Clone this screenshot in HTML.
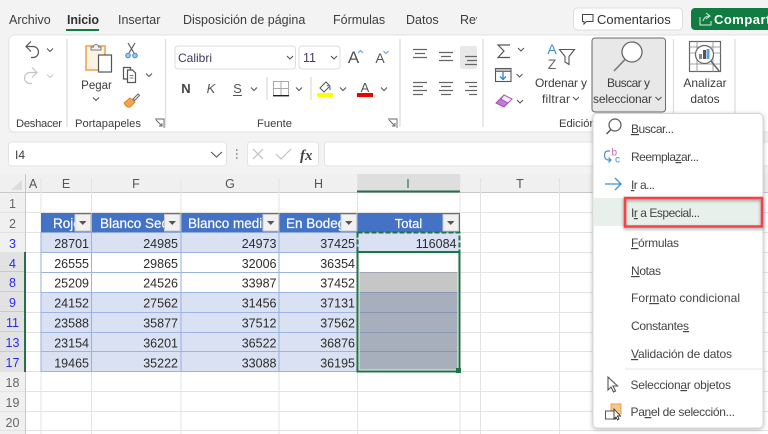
<!DOCTYPE html>
<html><head><meta charset="utf-8"><title>Excel</title>
<style>
html,body{margin:0;padding:0;background:#f3f3f3;width:768px;height:434px;overflow:hidden}
svg{display:block}
text{font-family:"Liberation Sans",sans-serif;font-size:12px;fill:#3c3c3c}
.t{font-size:12.5px}
.n{font-size:12.5px;fill:#2b2b2b}
.r{text-anchor:end}
.c{text-anchor:middle}
.h{font-size:13.5px;fill:#fff;stroke:#fff;stroke-width:.2}
.hd{font-size:12.5px;fill:#555;text-anchor:middle}
.rh{font-size:12.5px;fill:#666;text-anchor:middle}
.b{fill:#2a2af0}
.m{font-size:12px;fill:#444}
.l{font-size:11.2px}
.u{text-decoration:underline}
.ic{fill:none;stroke:#555;stroke-width:1.2}
.ch{fill:none;stroke:#555;stroke-width:1.1}
.grid line{stroke:#e3e3e3;stroke-width:1}
</style></head><body>
<svg width="768" height="434" viewBox="0 0 768 434" xmlns="http://www.w3.org/2000/svg">
<defs>
<filter id="sh" x="-10%" y="-10%" width="120%" height="120%"><feDropShadow dx="0" dy="1" stdDeviation="2" flood-color="#000" flood-opacity=".28"/></filter>
<filter id="sh2" x="-10%" y="-30%" width="120%" height="170%"><feDropShadow dx="0" dy="1.5" stdDeviation="1.5" flood-color="#000" flood-opacity=".4"/></filter>
<path id="chev" d="M-3 -1.5 L0 1.5 L3 -1.5"/>
</defs>
<rect width="768" height="434" fill="#f3f3f3"/>

<!-- tabs -->
<text x="9" y="24" class="t">Archivo</text>
<text x="67" y="24" class="t" style="font-weight:700;fill:#333" textLength="32">Inicio</text>
<text x="118" y="24" class="t">Insertar</text>
<text x="183" y="24" class="t">Disposición de página</text>
<text x="333" y="24" class="t">Fórmulas</text>
<text x="406" y="24" class="t">Datos</text>
<svg x="460" y="8" width="17" height="22"><text x="0" y="16" class="t">Revisar</text></svg>
<rect x="66" y="29" width="33" height="2" fill="#107c41"/>

<rect x="573.5" y="8" width="109" height="22" rx="4" fill="#fff" stroke="#dcdcdc"/>
<path d="M582.500 14.500h10.500v7h-6.500l-2.500 2.500v-2.500h-1.500z" class="ic" style="stroke:#444;stroke-width:1"/>
<text x="597" y="24" style="font-size:13px;fill:#333">Comentarios</text>
<rect x="691" y="8" width="80" height="22" rx="4" fill="#107c41"/>
<path d="M700 17v8h11v-4M703 21c1-3 3-5 6-5M706 13l4 3-4 3" fill="none" stroke="#dcebe2" stroke-width="1"/>
<text x="714" y="24" style="font-size:13px;fill:#fff;font-weight:700" textLength="66">Compartir</text>

<!-- ribbon -->
<rect x="9" y="35" width="770" height="97" rx="5" fill="#fff" stroke="#e2e2e2"/>
<g stroke="#e1e1e1" stroke-width="1.4">
<line x1="67" y1="39" x2="67" y2="127"/><line x1="165.500" y1="39" x2="165.500" y2="127"/><line x1="400" y1="39" x2="400" y2="127"/><line x1="483" y1="39" x2="483" y2="127"/><line x1="673.500" y1="39" x2="673.500" y2="127"/><line x1="735" y1="39" x2="735" y2="127"/>
</g>

<!-- undo/redo -->
<path d="M31 41.500 L26 46.500 L31 51.500 M26 46.500 H33 a5.500 5.500 0 0 1 0 11 l-2 0" fill="none" stroke="#555" stroke-width="1.2"/>
<use href="#chev" x="50" y="50" class="ch"/>
<path d="M32 67.500 L37 72.500 L32 77.500 M37 72.500 H30 a5.500 5.500 0 0 0 0 11 l2 0" fill="none" stroke="#c4c4c4" stroke-width="1.2"/>
<use href="#chev" x="50" y="76" class="ch" style="stroke:#c8c8c8"/>
<text x="16" y="127" class="l" textLength="46">Deshacer</text>
<!-- clipboard -->
<rect x="86" y="46" width="19" height="24" fill="#fdf3e3" stroke="#eba14a" stroke-width="1.5"/>
<path d="M91 50v-3h2.500a2.500 2.500 0 0 1 5 0H101v3z" fill="#f4f4f4" stroke="#777"/>
<rect x="98.500" y="55" width="13" height="17" fill="#fff" stroke="#555" stroke-width="1.200"/>
<text x="96.500" y="89" class="c" style="font-size:11.500px">Pegar</text>
<use href="#chev" x="96" y="99" class="ch"/>
<!-- scissors -->
<path d="M128 43l6 10M135 43l-6 10" stroke="#555" fill="none" stroke-width="1.100"/>
<circle cx="128" cy="55.500" r="2.300" fill="#9cc8ec" stroke="#3d8fd6"/><circle cx="135" cy="55.500" r="2.300" fill="#9cc8ec" stroke="#3d8fd6"/>
<!-- copy -->
<path d="M127 79h-3.500V67.500h7v2" class="ic"/><path d="M127.500 70h5l3 3v9.500h-8z" class="ic"/><path d="M129.500 75.500h4M129.500 78h4" class="ic" style="stroke-width:.8"/>
<use href="#chev" x="149" y="75" class="ch"/>
<!-- brush -->
<path d="M133 99l5-5 1.500 1.500-5 5z" fill="#fff" stroke="#666"/>
<path d="M124 103l6-5 5 4-5 5c-2 .5-4-.5-6-4z" fill="#f5a55a" stroke="#e07f20"/>
<text x="75" y="127" class="l" textLength="66">Portapapeles</text>
<path d="M155 119h9v9M156 120l6 6M159 126h3v-3" fill="none" stroke="#666" stroke-width=".9"/>

<!-- font -->
<rect x="175" y="46" width="120.500" height="23" rx="3" fill="#fff" stroke="#dcdcdc"/>
<text x="178" y="62" style="font-size:12px;fill:#3a3a5a">Calibri</text>
<use href="#chev" x="290" y="57.500" class="ch"/>
<rect x="299" y="46" width="41" height="23" rx="3" fill="#fff" stroke="#dcdcdc"/>
<text x="303" y="62" style="font-size:12.500px;fill:#4a3a6a">11</text>
<use href="#chev" x="334" y="57.500" class="ch"/>
<text x="353.500" y="63" class="c" style="font-size:17px;fill:#555">A</text>
<path d="M358 53l2.500-2.500 2.500 2.500" fill="none" stroke="#6aa8dc" stroke-width="1.200"/>
<text x="380" y="63" class="c" style="font-size:14px;fill:#555">A</text>
<path d="M383.500 51l2.500 2.500 2.500-2.500" fill="none" stroke="#6aa8dc" stroke-width="1.200"/>
<text x="186" y="93" class="c" style="font-size:13px;font-weight:700;fill:#444">N</text>
<text x="211" y="93" class="c" style="font-size:13px;font-style:italic;fill:#555">K</text>
<text x="237.500" y="93" class="c" style="font-size:13px;fill:#555">S</text>
<rect x="233" y="95" width="9" height="1" fill="#555"/>
<use href="#chev" x="254" y="89" class="ch"/>
<line x1="267" y1="77" x2="267" y2="100" stroke="#ddd" stroke-width="1.300"/>
<rect x="273.500" y="81.500" width="15" height="14" fill="none" stroke="#aaa"/>
<path d="M281 81v14M273 88.500h16" stroke="#aaa" fill="none"/>
<rect x="273" y="95" width="16" height="1.400" fill="#222"/>
<use href="#chev" x="299" y="89" class="ch"/>
<line x1="311" y1="77" x2="311" y2="100" stroke="#ddd" stroke-width="1.300"/>
<path d="M326 82l-6 6 4 4 6-6z" class="ic" style="stroke-width:1"/><path d="M330 90c0-2 0-4-1-5l-2 1" fill="none" stroke="#2d7fc4" stroke-width="1.200"/>
<rect x="317" y="93" width="16" height="4" fill="#ffff00"/>
<use href="#chev" x="343" y="89" class="ch"/>
<text x="365" y="92" class="c" style="font-size:13px;fill:#555">A</text>
<rect x="357" y="93" width="16" height="4" fill="#ee0000"/>
<use href="#chev" x="384" y="89" class="ch"/>
<text x="257" y="127" class="l" textLength="35">Fuente</text>
<path d="M388 119h9v9M389 120l6 6M392 126h3v-3" fill="none" stroke="#666" stroke-width=".9"/>

<!-- align -->
<rect x="460" y="46" width="17" height="23" rx="2" fill="#e8e8e8"/>
<g stroke="#666" stroke-width="1.200">
<path d="M413 49.500h14M415 53.500h10M413 57.500h14"/>
<path d="M439 52.500h14M441 56.500h10M439 60.500h14"/>
<path d="M465 56.500h12M467 60.500h10M465 64.500h12"/>
<path d="M413 82.500h14M413 86.500h10M413 90.500h14M413 94.500h10"/>
<path d="M439 82.500h14M441 86.500h10M439 90.500h14M441 94.500h10"/>
<path d="M465 82.500h12M469 86.500h8M465 90.500h12M469 94.500h8"/>
</g>

<!-- edit -->
<path d="M510 45h-12l6 6-6 6.500h12" fill="none" stroke="#555" stroke-width="1.200"/>
<use href="#chev" x="521" y="49.500" class="ch"/>
<rect x="495.500" y="68.500" width="15.500" height="13" fill="#fff" stroke="#555" stroke-width="1.100"/>
<rect x="495.500" y="68.500" width="15.500" height="3" fill="#bbb" stroke="#555" stroke-width=".8"/>
<path d="M503 72v7M500 76.500l3 3 3-3" fill="none" stroke="#2d86d0" stroke-width="1.300"/>
<use href="#chev" x="519.500" y="75.500" class="ch"/>
<path d="M496 103l8-8 8 4-8 8z" fill="#c27bd2" stroke="#a050b5"/><path d="M504 95l8 4-4 4-7-4z" fill="#f4e8f6" stroke="#a050b5" stroke-width=".8"/>
<use href="#chev" x="520" y="101.500" class="ch"/>
<text x="552" y="54" class="c" style="font-size:14px;fill:#3c8fd4">A</text>
<text x="552" y="69" class="c" style="font-size:14px;fill:#666">Z</text>
<path d="M559.500 49.500h15l-5.500 7v8l-4-2.500v-5.500z" fill="none" stroke="#555" stroke-width="1.100"/>
<text x="535" y="87" textLength="52">Ordenar y</text>
<text x="542" y="103" textLength="28">filtrar</text>
<use href="#chev" x="576" y="98.500" class="ch" style="stroke-width:1"/>
<text x="559" y="127" class="l">Edición</text>

<rect x="592" y="38" width="73.500" height="74" rx="3" fill="#e8e8e8" stroke="#6a6a6a"/>
<circle cx="632" cy="52" r="10" fill="#fff" stroke="#666" stroke-width="1.300"/>
<line x1="625" y1="59.500" x2="614" y2="71" stroke="#777" stroke-width="1.600"/>
<text x="607" y="87" textLength="43">Buscar y</text>
<text x="593" y="103" textLength="59">seleccionar</text>
<use href="#chev" x="658.500" y="98.500" class="ch"/>

<!-- analyze -->
<rect x="689.500" y="41.500" width="31" height="30" fill="#fff" stroke="#666" stroke-width="1.200"/>
<path d="M689 47h32M689 64h32M697 41v31M713 41v31M689 53h32" stroke="#888" fill="none" stroke-width=".8"/>
<circle cx="704.500" cy="54.500" r="9" fill="#fff" stroke="#666" stroke-width="1.200"/>
<rect x="699" y="54" width="3" height="5" fill="#888"/><rect x="703" y="50" width="3" height="9" fill="#555"/><rect x="706.500" y="49" width="3" height="10" fill="#5ba3de"/>
<line x1="711" y1="61" x2="719" y2="71" stroke="#666" stroke-width="1.500"/>
<text x="705" y="87" class="c">Analizar</text>
<text x="705" y="103" class="c">datos</text>

<!-- formula bar -->
<rect x="8.500" y="142" width="218" height="24" rx="3" fill="#fff" stroke="#e3e3e3"/>
<text x="15" y="159" style="font-size:12px">I4</text>
<path d="M211 152l5.500 5 5.500-5" fill="none" stroke="#555" stroke-width="1.100"/>
<g fill="#999"><rect x="236" y="149" width="1.500" height="2"/><rect x="236" y="153" width="1.500" height="2"/><rect x="236" y="157" width="1.500" height="2"/></g>
<rect x="247.500" y="142" width="71" height="24" rx="3" fill="#fff" stroke="#e3e3e3"/>
<path d="M253 149l10 10M263 149l-10 10" stroke="#c0c0c0" stroke-width="1.200" fill="none"/>
<path d="M276 154l5 5 10-10" stroke="#c0c0c0" stroke-width="1.200" fill="none"/>
<text x="300" y="160" style="font-family:'Liberation Serif',serif;font-style:italic;font-weight:700;font-size:15px;fill:#444">fx</text>
<rect x="324.500" y="142" width="460" height="24" rx="3" fill="#fff" stroke="#e3e3e3"/>

<!-- sheet -->
<rect x="0" y="174" width="768" height="260" fill="#fff"/>
<rect x="0" y="174" width="768" height="18" fill="#f0f0f0"/>
<rect x="0" y="174" width="25" height="260" fill="#f0f0f0"/>
<path d="M22 180v10h-11z" fill="#dcdcdc"/>
<rect x="0" y="252" width="25" height="119.500" fill="#e2e2e2"/>
<rect x="357" y="174" width="103" height="18" fill="#dedede"/>
<g class="grid">
<line x1="0" y1="192.500" x2="768" y2="192.500" style="stroke:#c8c8c8"/>
<line x1="0" y1="212.500" x2="768" y2="212.500"/><line x1="0" y1="232.500" x2="768" y2="232.500"/><line x1="0" y1="252.500" x2="768" y2="252.500"/><line x1="0" y1="272.500" x2="768" y2="272.500"/><line x1="0" y1="292.500" x2="768" y2="292.500"/><line x1="0" y1="312.500" x2="768" y2="312.500"/><line x1="0" y1="332.500" x2="768" y2="332.500"/><line x1="0" y1="351.500" x2="768" y2="351.500"/><line x1="0" y1="371.500" x2="768" y2="371.500"/><line x1="0" y1="391.500" x2="768" y2="391.500"/><line x1="0" y1="411.500" x2="768" y2="411.500"/><line x1="0" y1="430.500" x2="768" y2="430.500"/>
<line x1="25.500" y1="174" x2="25.500" y2="434" style="stroke:#c8c8c8"/>
<line x1="41" y1="178" x2="41" y2="434"/><line x1="91.500" y1="178" x2="91.500" y2="434"/><line x1="181" y1="178" x2="181" y2="434"/><line x1="279" y1="178" x2="279" y2="434"/><line x1="357.500" y1="178" x2="357.500" y2="434"/><line x1="460" y1="178" x2="460" y2="434"/><line x1="480.500" y1="178" x2="480.500" y2="434"/><line x1="559.500" y1="178" x2="559.500" y2="434"/>
</g>
<rect x="357" y="190.500" width="103" height="2" fill="#217346"/>
<text x="33" y="188" class="hd">A</text><text x="66" y="188" class="hd">E</text><text x="136" y="188" class="hd">F</text><text x="230" y="188" class="hd">G</text><text x="318.500" y="188" class="hd">H</text><text x="408" y="188" class="hd" style="fill:#217346">I</text><text x="520" y="188" class="hd">T</text>

<!-- row headers -->
<text x="12.500" y="208" class="rh">1</text>
<text x="12.500" y="228" class="rh">2</text>
<text x="12.500" y="248" class="rh b">3</text>
<text x="12.500" y="268" class="rh b">4</text>
<text x="12.500" y="287" class="rh b">8</text>
<text x="12.500" y="307" class="rh b">9</text>
<text x="12.500" y="327" class="rh b">11</text>
<text x="12.500" y="347" class="rh b">13</text>
<text x="12.500" y="367" class="rh b">17</text>
<text x="12.500" y="387" class="rh">18</text>
<text x="12.500" y="407" class="rh">19</text>
<text x="12.500" y="427" class="rh">20</text>
<g stroke="#c9c9c9"><path d="M0 271.500h25M0 291.500h25M0 311.500h25M0 331.500h25M0 351.500h25"/></g>
<rect x="24" y="252" width="2" height="120" fill="#217346"/>

<!-- table -->
<rect x="41" y="213" width="316" height="19.500" fill="#4472c4"/>
<rect x="357" y="213" width="103" height="19.500" fill="#4472c4"/>
<rect x="41" y="232.500" width="316" height="20" fill="#d9e1f2"/>
<rect x="357" y="232.500" width="103" height="20" fill="#d9e1f2"/>
<rect x="41" y="292" width="316" height="79.500" fill="#d9e1f2"/>
<rect x="41" y="252.500" width="316" height="39.500" fill="#fff"/>
<g stroke="#9db4e0" stroke-width="1.100" fill="none">
<path d="M41 252.500h316M41 272.500h316M41 292.500h316M41 312.500h316M41 332.500h316M41 351.500h316M41 371.500h316"/>
<path d="M41 232v140M91.500 213v159M181 213v159M279 213v159M357 213v159"/>
</g>
<!-- header cells -->
<svg x="41" y="213" width="34" height="20"><text x="12" y="15" class="h">Rojo</text></svg>
<svg x="91" y="213" width="73" height="20"><text x="9" y="15" class="h">Blanco Seco</text></svg>
<svg x="181" y="213" width="82" height="20"><text x="7" y="15" class="h">Blanco medio</text></svg>
<svg x="279" y="213" width="62" height="20"><text x="7" y="15" class="h">En Bodega</text></svg>
<text x="408.500" y="228" class="h c" style="font-size:13px">Total</text>
<g>
<rect x="75" y="214.500" width="15.500" height="16.500" fill="#f1f1f1" stroke="#ccc"/><path d="M79 221h7.500l-3.750 4z" fill="#555"/>
<rect x="164.500" y="214.500" width="15.500" height="16.500" fill="#f1f1f1" stroke="#ccc"/><path d="M168.500 221h7.500l-3.750 4z" fill="#555"/>
<rect x="263" y="214.500" width="15.500" height="16.500" fill="#f1f1f1" stroke="#ccc"/><path d="M267 221h7.500l-3.750 4z" fill="#555"/>
<rect x="341" y="214.500" width="15.500" height="16.500" fill="#f1f1f1" stroke="#ccc"/><path d="M345 221h7.500l-3.750 4z" fill="#555"/>
<rect x="443" y="214.500" width="15.500" height="16.500" fill="#f1f1f1" stroke="#ccc"/><path d="M447 221h7.500l-3.750 4z" fill="#555"/>
</g>
<g>
<text class="n r" x="89" y="248">28701</text><text class="n r" x="178" y="248">24985</text><text class="n r" x="276.500" y="248">24973</text><text class="n r" x="355" y="248">37425</text>
<text class="n r" x="89" y="268">26555</text><text class="n r" x="178" y="268">29865</text><text class="n r" x="276.500" y="268">32006</text><text class="n r" x="355" y="268">36354</text>
<text class="n r" x="89" y="287.500">25209</text><text class="n r" x="178" y="287.500">24526</text><text class="n r" x="276.500" y="287.500">33987</text><text class="n r" x="355" y="287.500">37452</text>
<text class="n r" x="89" y="307.500">24152</text><text class="n r" x="178" y="307.500">27562</text><text class="n r" x="276.500" y="307.500">31456</text><text class="n r" x="355" y="307.500">37131</text>
<text class="n r" x="89" y="327.500">23588</text><text class="n r" x="178" y="327.500">35877</text><text class="n r" x="276.500" y="327.500">37512</text><text class="n r" x="355" y="327.500">37562</text>
<text class="n r" x="89" y="347.500">23154</text><text class="n r" x="178" y="347.500">36201</text><text class="n r" x="276.500" y="347.500">36522</text><text class="n r" x="355" y="347.500">36876</text>
<text class="n r" x="89" y="367.500">19465</text><text class="n r" x="178" y="367.500">35222</text><text class="n r" x="276.500" y="367.500">33088</text><text class="n r" x="355" y="367.500">36195</text>
<text class="n r" x="456.500" y="248">116084</text>
</g>

<!-- selection -->
<rect x="358" y="272" width="101" height="20" fill="#c6c6c6"/>
<rect x="358" y="292" width="101" height="79" fill="#a7aebc"/>
<path d="M358 272.500h101" stroke="#a0a6b0"/>
<path d="M358 292.500h101M358 312.500h101M358 332.500h101M358 351.500h101" stroke="#8996b5" stroke-width="1.100"/>
<rect x="359" y="254" width="99" height="116" fill="none" stroke="#eef0f0" stroke-width="1"/>
<rect x="357.500" y="252" width="102" height="119.500" fill="none" stroke="#217346" stroke-width="2"/>
<rect x="357.500" y="232.500" width="102" height="19.500" fill="none" stroke="#217346" stroke-width="2" stroke-dasharray="5 2"/>
<rect x="456" y="368" width="5" height="5" fill="#217346"/>

<!-- menu -->
<rect x="593" y="113.500" width="170" height="314.500" rx="4" fill="#fff" stroke="#d4d4d4" filter="url(#sh)"/>
<rect x="594" y="198" width="168" height="28" fill="#e8f0eb"/>
<circle cx="615" cy="125" r="6" fill="#fff" stroke="#555" stroke-width="1.200"/><line x1="611" y1="129.500" x2="606.500" y2="134" stroke="#555" stroke-width="1.500"/>
<text x="611.500" y="155.500" style="font-size:10px;fill:#c060c8">b</text>
<text x="615" y="162.500" style="font-size:10px;fill:#3a8fd0">c</text>
<path d="M610 151h-2c-2.500 0-3.500 2-3.500 4.500s1.500 4.500 3.500 4.500h3M608.500 157.500l2.500 2.500-2.500 2.500" fill="none" stroke="#3a8fd0" stroke-width="1.200"/>
<path d="M605 184h16M615 178l6 6-6 6" fill="none" stroke="#3a90d4" stroke-width="1.300"/>
<text x="631" y="133" class="m" textLength="43"><tspan class="u">B</tspan>uscar...</text>
<text x="631" y="161" class="m" textLength="68">Reempla<tspan class="u">z</tspan>ar...</text>
<text x="631" y="189" class="m" textLength="24"><tspan class="u">I</tspan>r a...</text>
<text x="631" y="217" class="m" textLength="69">I<tspan class="u">r</tspan> a Especial...</text>
<text x="631" y="247" class="m" textLength="48"><tspan class="u">F</tspan>órmulas</text>
<text x="631" y="275" class="m" textLength="30"><tspan class="u">N</tspan>otas</text>
<text x="631" y="302" class="m" textLength="109">For<tspan class="u">m</tspan>ato condicional</text>
<text x="631" y="330" class="m" textLength="58">Constante<tspan class="u">s</tspan></text>
<text x="631" y="358" class="m" textLength="101"><tspan class="u">V</tspan>alidación de datos</text>
<line x1="625" y1="369" x2="762" y2="369" stroke="#e6e6e6"/>
<path d="M608 377v13l3-3 2.500 5 2-1-2.500-5h4.500z" fill="#fff" stroke="#555" stroke-width="1.100"/>
<text x="630.500" y="389" class="m" textLength="100.500">Seleccion<tspan class="u">a</tspan>r objetos</text>
<rect x="611" y="404" width="10" height="10" fill="#f8c78a" stroke="#eba14a"/>
<rect x="605.500" y="411" width="10" height="8" fill="#fff" stroke="#555"/>
<path d="M614 409v10l2-2 1.500 3 1.500-1-1.500-3h3z" fill="#fff" stroke="#333" stroke-width=".9"/>
<text x="630.500" y="416" class="m" textLength="104.500">Pa<tspan class="u">n</tspan>el de selección...</text>

<rect x="625" y="198" width="137" height="28.500" fill="none" stroke="#f5434a" stroke-width="2.500" filter="url(#sh2)"/>
</svg>
</body></html>
